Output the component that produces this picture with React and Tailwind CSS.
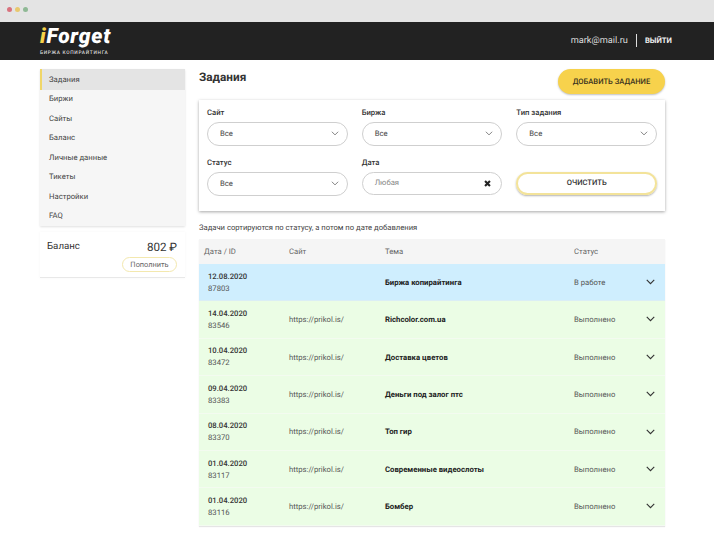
const rows = [
  ["12.08.2020", "87803", "", "Биржа копирайтинга", "В работе", true],
  ["14.04.2020", "83546", "https://prikol.is/", "Richcolor.com.ua", "Выполнено"],
  ["10.04.2020", "83472", "https://prikol.is/", "Доставка цветов", "Выполнено"],
  ["09.04.2020", "83383", "https://prikol.is/", "Деньги под залог птс", "Выполнено"],
  ["08.04.2020", "83370", "https://prikol.is/", "Топ гир", "Выполнено"],
  ["01.04.2020", "83117", "https://prikol.is/", "Современные видеослоты", "Выполнено"],
  ["01.04.2020", "83116", "https://prikol.is/", "Бомбер", "Выполнено"],
];
const nav = ["Биржи", "Сайты", "Баланс", "Личные данные", "Тикеты", "Настройки", "FAQ"];

function Chevron({ className, w = 2 }) {
  return (
    <svg viewBox="0 0 12 8" fill="none" stroke="currentColor" strokeWidth={w} className={className}>
      <path d="M1 1.2 L6 6.2 L11 1.2" />
    </svg>
  );
}

function Select({ label }) {
  return (
    <div className="flex flex-col">
      <div className="text-[7.7px] leading-[12px] font-medium text-[#333] mb-[2.5px]">{label}</div>
      <div className="h-[24px] rounded-full border border-[#cfcfcf] flex items-center justify-between pl-[12px] pr-[8px] text-[7.7px] text-[#444]">
        <span>Все</span>
        <Chevron className="w-[8px] h-[5px] text-[#666]" w={1.3} />
      </div>
    </div>
  );
}

export default function App() {
  return (
    <div className="w-[714px] h-[543px] overflow-hidden bg-white font-['Roboto',sans-serif] text-[#333] [text-rendering:geometricPrecision]">
      <div className="h-[22px] bg-[#e4e4e4] flex items-start gap-[3.5px] pl-[7px] pt-[7px]">
        <span className="w-[4.5px] h-[4.5px] rounded-full bg-[#d9727e]" />
        <span className="w-[4.5px] h-[4.5px] rounded-full bg-[#e8c86e]" />
        <span className="w-[4.5px] h-[4.5px] rounded-full bg-[#8fb995]" />
      </div>
      <header className="h-[38px] bg-[#222222] flex items-center justify-between pl-[40px] pr-[42px]">
        <div className="flex flex-col">
          <div className="text-[21px] leading-[21px] font-black italic tracking-[0.8px] text-white mt-[1px]">
            <span className="text-[#f5d24b]">i</span>Forget
          </div>
          <div className="text-[4.8px] leading-[6px] tracking-[0.7px] text-[#ddd] mt-[3px] font-medium">БИРЖА КОПИРАЙТИНГА</div>
        </div>
        <div className="flex items-center">
          <span className="text-[9.2px] text-[#dcdcdc]">mark@mail.ru</span>
          <span className="w-px h-[13px] bg-[#ddd] mx-[8px]" />
          <span className="text-[7.7px] font-bold text-[#eee]">ВЫЙТИ</span>
        </div>
      </header>

      <div className="flex gap-[14px] pl-[40px] pt-[9px]">
        <aside className="w-[145px] shrink-0">
          <nav className="bg-[#f6f6f6] shadow-[0_1px_2px_rgba(0,0,0,0.12)] text-[7.7px] text-[#444]">
            <div className="h-[20.5px] bg-[#e4e4e4] border-l-2 border-[#f0d668] pl-[7px] pt-[1px] flex items-center">Задания</div>
            {nav.map((n) => (
              <div key={n} className="h-[19.5px] pl-[9px] flex items-center">{n}</div>
            ))}
          </nav>
          <div className="mt-[6px] h-[46px] border-b border-[#e8e8e8] bg-white shadow-[0_0_3px_rgba(0,0,0,0.04)] pl-[7px] pr-[8px] pt-[7px]">
            <div className="flex items-center justify-between">
              <span className="text-[9.7px] text-[#333]">Баланс</span>
              <span className="text-[11.6px] text-[#333]">802 ₽</span>
            </div>
            <div className="flex justify-end mt-[1px]">
              <div className="h-[15px] w-[55px] rounded-full border border-[#f3e8ae] flex items-center justify-center text-[7.4px] text-[#666]">Пополнить</div>
            </div>
          </div>
        </aside>

        <main className="w-[466px] shrink-0">
          <div className="flex items-start justify-between h-[31px]">
            <h1 className="text-[11.8px] leading-[16px] font-bold text-[#333]">Задания</h1>
            <div className="h-[25px] w-[107px] rounded-full bg-[#f7d24c] shadow-[0_1px_2px_rgba(0,0,0,0.25)] flex items-center justify-center text-[7.6px] font-medium text-[#3a3320]">ДОБАВИТЬ ЗАДАНИЕ</div>
          </div>
          <section className="h-[111px] bg-white shadow-[0_1px_3px_rgba(0,0,0,0.35)] px-[8px] pt-[7px] grid grid-cols-3 gap-x-[14px] gap-y-[11.5px] content-start">
            <Select label="Сайт" />
            <Select label="Биржа" />
            <Select label="Тип задания" />
            <Select label="Статус" />
            <div className="flex flex-col">
              <div className="text-[7.7px] leading-[12px] font-medium text-[#333] mb-[2.5px]">Дата</div>
              <div className="h-[23px] rounded-full border border-[#cfcfcf] flex items-center justify-between pl-[12px] pr-[10px] text-[7.7px] text-[#888]">
                <span>Любая</span>
                <svg viewBox="0 0 10 10" className="w-[7px] h-[7px] text-[#222]" stroke="currentColor" strokeWidth="3">
                  <path d="M1.5 1.5 L8.5 8.5 M8.5 1.5 L1.5 8.5" />
                </svg>
              </div>
            </div>
            <div className="pt-[14.5px]">
              <div className="h-[23px] rounded-full border-2 border-[#f3e39a] shadow-[0_1px_2px_rgba(0,0,0,0.3)] flex items-center justify-center text-[7.6px] font-medium text-[#333]">ОЧИСТИТЬ</div>
            </div>
          </section>
          <p className="text-[7.65px] leading-[12px] text-[#444] mt-[10.5px]">Задачи сортируются по статусу, а потом по дате добавления</p>
          <div className="mt-[5.5px] shadow-[0_1px_1px_rgba(0,0,0,0.1)]">
            <div className="h-[25px] bg-[#f5f5f5] grid grid-cols-[85px_96px_189px_1fr] items-center pl-[5px] text-[7.7px] text-[#666]">
              <span>Дата / ID</span>
              <span>Сайт</span>
              <span>Тема</span>
              <span>Статус</span>
            </div>
            {rows.map((r, i) => (
              <div key={i} className={`relative h-[37.4px] pt-[1px] grid grid-cols-[81px_96px_189px_1fr] items-center pl-[9px] border-b ${r[5] ? "bg-[#cfeefe] border-[#dbeef5]" : "bg-[#ebfde5] border-[#f3fbf0]"}`}>
                <div>
                  <div className="text-[7.7px] leading-[12px] font-medium text-[#333]">{r[0]}</div>
                  <div className="text-[7.7px] leading-[12px] text-[#555]">{r[1]}</div>
                </div>
                <span className="text-[7.7px] text-[#555]">{r[2]}</span>
                <span className="text-[7.75px] font-bold text-[#222]">{r[3]}</span>
                <span className="text-[7.7px] text-[#555]">{r[4]}</span>
                <Chevron className="absolute right-[10px] top-[15px] w-[9px] h-[6px] text-[#333]" w={1.5} />
              </div>
            ))}
          </div>
        </main>
      </div>
    </div>
  );
}
